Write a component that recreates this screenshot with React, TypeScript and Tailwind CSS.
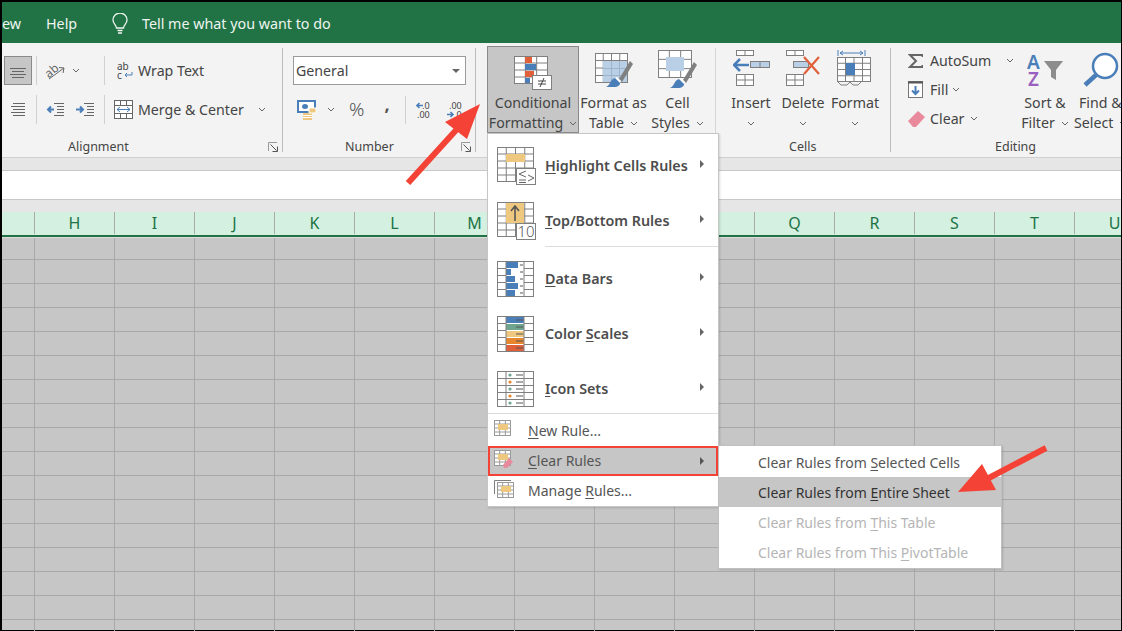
import type { ReactNode } from 'react'

// N, O and P sit behind the open menu
const COLS = ['', 'H', 'I', 'J', 'K', 'L', 'M', '', '', '', 'Q', 'R', 'S', 'T', 'U']
const ROWS = Array.from({ length: 17 }, (_, i) => i)

const GRAY = '#7f7f7f'
const BLUE = '#4a7eb8'
const ORANGE = '#e0603a'
const TAN = '#eec87e'

function Chevron({ className = '' }: { className?: string }) {
  return (
    <svg width="8" height="5" viewBox="0 0 8 5" className={`shrink-0 ${className}`}>
      <path d="M1 1l3 3 3-3" fill="none" stroke="#666" strokeWidth="1" />
    </svg>
  )
}

function Launcher() {
  return (
    <svg width="10" height="10" viewBox="0 0 10 10" className="shrink-0">
      <path d="M.5 9V.5H9" fill="none" stroke="#999" />
      <path d="M2.5 2.5l6 6M9.5 4.5v5h-5" fill="none" stroke="#555" />
    </svg>
  )
}

// table outline with evenly spaced lines, used by most of the ribbon and menu icons
function Grid({ x, y, w, h, cols, rows, stroke = GRAY, children }: { x: number; y: number; w: number; h: number; cols: number; rows: number; stroke?: string; children?: ReactNode }) {
  const vs = Array.from({ length: cols - 1 }, (_, i) => x + ((i + 1) * w) / cols)
  const hs = Array.from({ length: rows - 1 }, (_, i) => y + ((i + 1) * h) / rows)
  return (
    <>
      <rect x={x} y={y} width={w} height={h} fill="#fff" />
      <g stroke={stroke} strokeWidth="1" fill="none">
        {vs.map((v) => <path key={v} d={`M${v} ${y}V${y + h}`} />)}
        {hs.map((v) => <path key={v} d={`M${x} ${v}H${x + w}`} />)}
      </g>
      {children}
      <rect x={x + 0.5} y={y + 0.5} width={w - 1} height={h - 1} fill="none" stroke={stroke} />
    </>
  )
}

function AlignLines({ x = 0, w = 14 }: { x?: number; w?: number }) {
  return <path d={`M${x + 2} 1.5H${x + w}M${x} 4.5H${x + w}M${x + 2} 7.5H${x + w}M${x} 10.5H${x + w}M${x + 2} 13.5H${x + w}`} stroke="#666" fill="none" />
}

function CondIcon() {
  return (
    <svg width="38" height="34" viewBox="0 0 38 34">
      <Grid x={0} y={0} w={34} h={28} cols={3} rows={4}>
        <rect x="11" y="1" width="7" height="6" fill={ORANGE} />
        <rect x="11" y="8" width="11" height="6" fill={BLUE} />
        <rect x="11" y="15" width="9" height="6" fill={ORANGE} />
        <rect x="11" y="22" width="5" height="6" fill={BLUE} />
      </Grid>
      <rect x="18.5" y="19.5" width="19" height="14" fill="#fff" stroke={GRAY} />
      <path d="M24 25h8M24 28h8M30 22l-4 9" stroke="#444" fill="none" />
    </svg>
  )
}

function Brush({ x, y }: { x: number; y: number }) {
  return (
    <g transform={`translate(${x} ${y})`}>
      <path d="M14 14L25 -4l3 3-11 18z" fill="#808080" />
      <path d="M0 22c5 0 5-8 10-9 3 0 6 3 5 6-1 2-3 3-5 3z" fill={BLUE} />
      <path d="M10 13l2-1 4 4-1 2z" fill="#fff" />
    </g>
  )
}

function TableIcon() {
  return (
    <svg width="38" height="36" viewBox="0 0 38 36">
      <Grid x={0} y={0} w={33} h={30} cols={4} rows={4}>
        <rect x="8" y="8" width="25" height="22" fill="#b9cfe5" />
        <path d="M16.500 8v22M24.500 8v22M8 15.500h25M8 22.500h25" stroke="#9fb4c9" />
      </Grid>
      <Brush x={10} y={12} />
    </svg>
  )
}

function StylesIcon() {
  return (
    <svg width="39" height="38" viewBox="0 0 39 38">
      <Grid x={0} y={0} w={34} h={28} cols={3} rows={3}>
        <rect x="8" y="7" width="18" height="14" fill="#b9cfe5" />
      </Grid>
      <Brush x={11} y={16} />
    </svg>
  )
}

function InsertIcon() {
  return (
    <svg width="37" height="37" viewBox="0 0 37 37">
      <Grid x={3} y={0} w={18} h={6} cols={2} rows={1} />
      <rect x="17.5" y="11.5" width="19" height="6" fill="#b9cfe5" stroke={GRAY} />
      <path d="M27 12v6" stroke={GRAY} />
      <path d="M1 15h15M7 9l-6 6 6 6" fill="none" stroke={BLUE} strokeWidth="2.5" />
      <Grid x={3} y={24} w={18} h={12} cols={2} rows={2} />
    </svg>
  )
}

function DeleteIcon() {
  return (
    <svg width="36" height="37" viewBox="0 0 36 37">
      <Grid x={1} y={0} w={18} h={6} cols={2} rows={1} />
      <rect x="8.5" y="11.5" width="15" height="6" fill="#b9cfe5" stroke={GRAY} />
      <Grid x={1} y={24} w={18} h={12} cols={2} rows={2} />
      <path d="M19 7l15 17M34 7L19 24" stroke={ORANGE} strokeWidth="2.2" fill="none" />
    </svg>
  )
}

function FormatIcon() {
  return (
    <svg width="36" height="37" viewBox="0 0 36 37">
      <path d="M1 0v6M28 0v6M3 3h23M6 1L3 3l3 2M23 1l3 2-3 2" fill="none" stroke={BLUE} strokeWidth="1" />
      <Grid x={0} y={7} w={34} h={25} cols={4} rows={4}>
        <rect x="9" y="13" width="9" height="12" fill={BLUE} />
      </Grid>
      <path d="M1 32l3 3h6l3-3 3 3h5l3-3" fill="none" stroke={GRAY} />
    </svg>
  )
}

function SortIcon() {
  return (
    <svg width="38" height="36" viewBox="0 0 38 36">
      <text x="1" y="17" fontSize="19" fontWeight="600" fill={BLUE}>A</text>
      <text x="2" y="34" fontSize="19" fontWeight="600" fill="#9a5fc0">Z</text>
      <path d="M18 9h19l-7 9v10l-5-3v-7z" fill="#8c8c8c" />
    </svg>
  )
}

function FindIcon() {
  return (
    <svg width="38" height="35" viewBox="0 0 38 35">
      <circle cx="23" cy="14" r="12" fill="#fff" stroke={BLUE} strokeWidth="2.5" />
      <path d="M14 23L3 33" stroke={BLUE} strokeWidth="4.5" />
    </svg>
  )
}

// -- menu icons

function HighlightMenuIcon() {
  return (
    <svg width="40" height="38" viewBox="0 0 40 38">
      <Grid x={0} y={0} w={37} h={35} cols={4} rows={5}>
        <rect x="9" y="7" width="19" height="8" fill={TAN} />
      </Grid>
      <rect x="19.5" y="21.5" width="19" height="16" fill="#fff" stroke={GRAY} />
      <path d="M29 24l-7 3 7 3M31 28l6 3-6 3M22 33h7M22 35.5h7" fill="none" stroke="#666" />
    </svg>
  )
}

function TopMenuIcon() {
  return (
    <svg width="40" height="38" viewBox="0 0 40 38">
      <Grid x={0} y={0} w={37} h={35} cols={4} rows={5}>
        <rect x="9" y="1" width="18" height="20" fill={TAN} />
      </Grid>
      <path d="M18 19V4M14 9l4-5 4 5" fill="none" stroke="#555" strokeWidth="1.6" />
      <rect x="19.5" y="21.5" width="19" height="16" fill="#fff" stroke={GRAY} />
      <text x="29" y="35" textAnchor="middle" fontSize="15" fontWeight="300" fill="#555">10</text>
    </svg>
  )
}

function BarsMenuIcon({ variant }: { variant: 'data' | 'color' | 'icons' }) {
  const dataW = [12, 5, 9, 12, 9]
  const colors = [BLUE, '#6fa58e', TAN, '#e8862d', ORANGE]
  const dots = ['#6fa58e', '#e8862d', '#6fa58e', '#e8862d', '#6fa58e']
  return (
    <svg width="37" height="36" viewBox="0 0 37 36">
      <rect width="37" height="36" fill="#fff" />
      {[0, 1, 2, 3, 4].map((i) => (
        <g key={i}>
          {variant === 'data' && <rect x="9" y={i * 7 + 1} width={dataW[i]} height="6" fill={BLUE} />}
          {variant === 'color' && <rect x="9" y={i * 7 + 1} width="18" height="6" fill={colors[i]} />}
          {variant === 'icons' && <circle cx="13" cy={i * 7 + 4} r="1.6" fill={dots[i]} />}
          <path d={`M${variant === 'data' ? 23 : 19} ${i * 7 + 4}h${variant === 'data' ? 3 : 7}`} stroke="#555" />
        </g>
      ))}
      <g stroke={GRAY} fill="none">
        <rect x=".5" y=".5" width="36" height="35" />
        <path d="M9 0v36M27 0v36M0 7.500h9M0 14.500h9M0 21.500h9M0 28.500h9M27 7.500h10M27 14.500h10M27 21.500h10M27 28.500h10" />
        {variant === 'icons' && <path d="M9 7.500h18M9 14.500h18M9 21.500h18M9 28.500h18" />}
      </g>
    </svg>
  )
}

function SmallRuleIcon({ kind }: { kind: 'new' | 'clear' | 'manage' }) {
  return (
    <svg width="22" height="21" viewBox="0 0 22 21">
      {kind === 'manage' && <path d="M.5 14V.5H17" fill="none" stroke={GRAY} />}
      <g transform={kind === 'manage' ? 'translate(3 2)' : 'translate(0 0)'}>
        <Grid x={0} y={0} w={17} h={16} cols={3} rows={4} stroke="#9a9a9a">
          <rect x="4" y="4" width="10" height="6" fill={TAN} />
        </Grid>
      </g>
      {kind === 'clear' && <path d="M9 15l6-7 4 4-6 6h-3z" fill="#e88a9c" />}
    </svg>
  )
}

function BigMenuItem({ icon, children }: { icon: ReactNode; children: ReactNode }) {
  return (
    <div className="flex h-[55px] items-center pl-[9px] pr-[14px]">
      <span className="flex w-[48px] shrink-0">{icon}</span>
      <span className="mt-px text-[14.3px] font-semibold text-[#4d4d4d]">{children}</span>
      <span className="ml-auto -mt-1 h-0 w-0 border-y-[4px] border-l-[4px] border-y-transparent border-l-[#666]" />
    </div>
  )
}

function SmallMenuItem({ icon, children, active }: { icon: ReactNode; children: ReactNode; active?: boolean }) {
  return (
    <div className={`flex h-[30px] items-center pl-[6px] pr-[14px] text-[14px] text-[#555] ${active ? 'border-2 border-[#f44336] bg-[#c6c6c6] !pl-[4px] !pr-[12px] text-[#444]' : ''}`}>
      <span className="flex w-[34px] shrink-0 -translate-y-[1px]">{icon}</span>
      <span className="-mt-[2px]">{children}</span>
      {active && <span className="ml-auto h-0 w-0 border-y-[4px] border-l-[4px] border-y-transparent border-l-[#555]" />}
    </div>
  )
}

function BigButton({ width, icon, iconH = 'items-end', lines, caret, active, className = '' }: { width: number; icon: ReactNode; iconH?: string; lines: string[]; caret?: boolean; active?: boolean; className?: string }) {
  return (
    <div
      style={{ width }}
      className={`flex h-[87px] shrink-0 flex-col items-center text-[14.2px] leading-[20px] text-[#444] ${active ? 'border border-[#8a8a8a] bg-[#c6c6c6]' : ''} ${className}`}
    >
      <div className={`flex shrink-0 justify-center ${active ? 'h-[46px]' : 'h-[47px]'} ${iconH}`}>{icon}</div>
      <div className="whitespace-nowrap">{lines[0]}</div>
      <div className="flex h-[20px] items-center gap-[6px] whitespace-nowrap">
        {lines[1]}
        {caret && <Chevron />}
      </div>
    </div>
  )
}

function GroupLabel({ children, launcher }: { children: ReactNode; launcher?: boolean }) {
  return (
    <div className="-mb-[2px] mt-auto flex h-[14px] items-center pr-[4px] text-[12.5px] leading-none">
      {children}
      {launcher && <span className="ml-auto"><Launcher /></span>}
    </div>
  )
}

function Arrow({ className, viewBox, shaft, head }: { className: string; viewBox: string; shaft: string; head: string }) {
  return (
    <svg className={`absolute ${className}`} viewBox={viewBox}>
      <path d={shaft} stroke="#f44336" strokeWidth="6" fill="none" />
      <polygon points={head} fill="#f44336" />
    </svg>
  )
}

export default function App() {
  return (
    <div className="relative h-[631px] w-[1122px] overflow-hidden bg-black pb-px pl-[2px] pr-px pt-[2px] font-['Noto_Sans','Open_Sans',sans-serif]">
      <div className="flex h-full flex-col bg-[#c6c6c6]">

        {/* Title bar */}
        <div className="flex h-[41px] shrink-0 items-center bg-[#217346] pt-[3px] text-[14.3px] text-[#eef5f0]">
          <span className="w-[44px] overflow-hidden whitespace-nowrap">ew</span>
          <span className="w-[65px]">Help</span>
          <svg width="18" height="22" viewBox="0 0 18 22" className="shrink-0" fill="none" stroke="#eef5f0" strokeWidth="1.3">
            <path d="M5.500 15c0-3-3.500-4-3.500-8a7 7 0 0 1 14 0c0 4-3.500 5-3.500 8z" />
            <path d="M6.500 17.500h5M7 20h4" />
          </svg>
          <span className="ml-[13px] whitespace-nowrap">Tell me what you want to do</span>
        </div>

        {/* Ribbon */}
        <div className="flex h-[114px] shrink-0 overflow-hidden bg-[#f3f3f3] text-[14.2px] text-[#444]">

          {/* Alignment */}
          <div className="my-[5px] flex w-[281px] shrink-0 flex-col border-r border-[#bdbdbd] pt-[8px]">
            <div className="grid h-[29px] grid-cols-[34px_68px_178px]">
              <div className="flex items-center pl-[2px]">
                <div className="flex h-[29px] w-[28px] items-center justify-center border border-[#8a8a8a] bg-[#c6c6c6]">
                  <svg width="16" height="15" viewBox="0 0 16 15"><path d="M0 5.500h16M2 8.500h12M0 11.500h16M2 14.500h12" stroke="#666" fill="none" /></svg>
                </div>
              </div>
              <div className="flex items-center gap-[6px] border-l border-[#d0d0d0] pl-[8px]">
                <svg width="21" height="20" viewBox="0 0 21 20">
                  <text x="0" y="13" fontSize="12" fill="#666" transform="rotate(-40 8 10)">ab</text>
                  <path d="M4 18L19 7M14 6.500l5 .5-1 5" fill="none" stroke="#666" />
                </svg>
                <Chevron />
              </div>
              <div className="flex items-center border-l border-[#d0d0d0] pl-[12px]">
                <svg width="17" height="20" viewBox="0 0 17 20">
                  <text x="0" y="9" fontSize="10" fill="#444">ab</text>
                  <text x="0" y="18" fontSize="10" fill="#444">c</text>
                  <path d="M15 11v3H8M10 12l-2 2 2 2" fill="none" stroke={BLUE} />
                </svg>
                <span className="ml-[4px]">Wrap Text</span>
              </div>
            </div>
            <div className="mt-[10px] grid h-[29px] grid-cols-[34px_68px_178px]">
              <div className="flex items-center pl-[9px]">
                <svg width="15" height="15" viewBox="0 0 15 15"><AlignLines /></svg>
              </div>
              <div className="flex items-center gap-[12px] border-l border-[#d0d0d0] pl-[9px]">
                <svg width="18" height="15" viewBox="0 0 18 15">
                  <path d="M8 1.500h10M11 4.500h7M11 7.500h7M11 10.500h7M8 13.500h10" stroke="#666" />
                  <path d="M8 7.500H2M5 4.500l-3 3 3 3" fill="none" stroke={BLUE} strokeWidth="2" />
                </svg>
                <svg width="18" height="15" viewBox="0 0 18 15">
                  <path d="M8 1.500h10M11 4.500h7M11 7.500h7M11 10.500h7M8 13.500h10" stroke="#666" />
                  <path d="M0 7.500h7M4 4.500l3 3-3 3" fill="none" stroke={BLUE} strokeWidth="2" />
                </svg>
              </div>
              <div className="flex items-center border-l border-[#d0d0d0] pl-[9px]">
                <svg width="19" height="19" viewBox="0 0 19 19">
                  <rect x=".5" y=".5" width="18" height="18" fill="#fff" stroke="#666" />
                  <path d="M0 5.500h19M0 13.500h19M6.500 0v5M12.500 0v5M6.500 14v5M12.500 14v5" stroke="#666" />
                  <path d="M3 9.500h13M6 7l-3 2.500L6 12M13 7l3 2.500-3 2.500" fill="none" stroke={BLUE} />
                </svg>
                <span className="ml-[5px]">Merge &amp; Center</span>
                <Chevron className="ml-[14px]" />
              </div>
            </div>
            <GroupLabel launcher><span className="ml-[66px]">Alignment</span></GroupLabel>
          </div>

          {/* Number */}
          <div className="my-[5px] flex w-[193px] shrink-0 flex-col border-r border-[#bdbdbd] pt-[8px]">
            <div className="ml-[10px] flex h-[29px] w-[173px] items-center border border-[#9a9a9a] bg-white pl-[2px] pr-[5px]">
              <span>General</span>
              <span className="ml-auto h-0 w-0 border-x-[4px] border-t-[4px] border-x-transparent border-t-[#666]" />
            </div>
            <div className="mt-[10px] flex h-[29px] items-center">
              <svg width="20" height="20" viewBox="0 0 20 20" className="ml-[14px]">
                <rect x="1" y="1" width="17" height="11" fill="#fff" stroke={BLUE} strokeWidth="2" />
                <ellipse cx="8" cy="6.500" rx="3" ry="2.500" fill={BLUE} />
                <path d="M6 13h9v7H6z" fill={TAN} />
                <path d="M6 15.500h9M6 17.500h9M12 8h7v5h-7z" stroke="#fff" fill={TAN} />
              </svg>
              <Chevron className="ml-[10px]" />
              <span className="ml-[14px] text-[19px] font-light leading-none text-[#555]">%</span>
              <span className="-mt-3 ml-[20px] text-[18px] font-bold leading-none text-[#555]">,</span>
              <span className="ml-[15px] h-[28px] w-px bg-[#d0d0d0]" />
              <svg width="17" height="18" viewBox="0 0 17 18" className="ml-[10px]">
                <text x="6" y="8" fontSize="9" fill="#444">.0</text>
                <text x="1" y="17" fontSize="9" fill="#444">.00</text>
                <path d="M7 4.500H1M3.500 2l-2.500 2.500L3.500 7" fill="none" stroke={BLUE} strokeWidth="1.600" />
              </svg>
              <svg width="17" height="18" viewBox="0 0 17 18" className="ml-[13px]">
                <text x="3" y="8" fontSize="9" fill="#444">.00</text>
                <text x="8" y="17" fontSize="9" fill="#444">.0</text>
                <path d="M1 13.500h6M4.500 11l2.500 2.500L4.500 16" fill="none" stroke={BLUE} strokeWidth="1.600" />
              </svg>
            </div>
            <GroupLabel launcher><span className="ml-[62px]">Number</span></GroupLabel>
          </div>

          {/* Styles, its label sits behind the open menu */}
          <div className="my-[5px] flex w-[240px] shrink-0 items-start border-r border-[#d6d6d6]">
            <BigButton width={92} icon={<CondIcon />} iconH="items-start pt-[9px]" lines={['Conditional', 'Formatting']} caret active className="-mt-[2px] ml-[11px]" />
            <BigButton width={63} icon={<TableIcon />} iconH="items-start pt-[7px]" lines={['Format as', 'Table']} caret className="-mt-[2px] ml-[3px]" />
            <BigButton width={63} icon={<StylesIcon />} iconH="items-start pt-[4px]" lines={['Cell', 'Styles']} caret className="-mt-[2px] ml-px" />
          </div>

          {/* Cells */}
          <div className="my-[5px] flex w-[175px] shrink-0 flex-col border-r border-[#bdbdbd]">
            <div className="-mt-[2px] flex pl-[9px]">
              {[['Insert', <InsertIcon key="i" />], ['Delete', <DeleteIcon key="d" />], ['Format', <FormatIcon key="f" />]].map(([label, icon]) => (
                <div key={label as string} className="flex h-[87px] w-[52px] flex-col items-center text-[14.2px] leading-[20px]">
                  <div className="flex h-[47px] shrink-0 items-start pt-[4px]">{icon}</div>
                  <div>{label}</div>
                  <div className="flex h-[20px] items-center"><Chevron /></div>
                </div>
              ))}
            </div>
            <GroupLabel><span className="ml-[73px]">Cells</span></GroupLabel>
          </div>

          {/* Editing */}
          <div className="my-[5px] flex min-w-0 flex-1 flex-col">
            <div className="-mt-[2px] flex">
              <div className="ml-[17px] flex w-[107px] shrink-0 flex-col">
                <div className="flex h-[29px] items-center">
                  <svg width="15" height="14" viewBox="0 0 15 14"><path d="M14.500 3V1H2l6 6-6 6h12.500v-2" fill="none" stroke="#666" strokeWidth="2" /></svg>
                  <span className="ml-[7px]">AutoSum</span>
                  <Chevron className="ml-[15px]" />
                </div>
                <div className="flex h-[29px] items-center">
                  <svg width="15" height="17" viewBox="0 0 15 17">
                    <rect x=".5" y=".5" width="14" height="16" fill="#fff" stroke="#777" />
                    <path d="M0 1.500h15" stroke="#555" strokeWidth="2" />
                    <path d="M7.500 5v8M4 9.500l3.500 3.500L11 9.500" fill="none" stroke={BLUE} strokeWidth="2" />
                  </svg>
                  <span className="ml-[7px]">Fill</span>
                  <Chevron className="ml-[4px]" />
                </div>
                <div className="flex h-[29px] items-center">
                  <svg width="17" height="16" viewBox="0 0 17 16"><path d="M0 10L10 0l7 6-9 10H5z" fill="#e88a9c" /></svg>
                  <span className="ml-[5px]">Clear</span>
                  <Chevron className="ml-[6px]" />
                </div>
              </div>
              <div className="flex">
                <BigButton width={60} icon={<SortIcon />} iconH="items-start pt-[6px]" lines={['Sort &', 'Filter']} caret />
                <div className="-ml-px flex h-[87px] w-[60px] shrink-0 flex-col text-[14.2px] leading-[20px]">
                  <div className="flex h-[47px] shrink-0 items-start pl-[8px] pt-[6px]"><FindIcon /></div>
                  <div className="whitespace-nowrap pl-[5px]">Find &amp;</div>
                  <div className="flex h-[20px] items-center gap-[6px] whitespace-nowrap">Select <Chevron /></div>
                </div>
              </div>
            </div>
            <GroupLabel><span className="ml-[104px]">Editing</span></GroupLabel>
          </div>
        </div>

        {/* Formula bar */}
        <div className="h-[13px] shrink-0 border-t border-[#cfcfcf] bg-[#e6e6e6]" />
        <div className="h-[30px] shrink-0 border-y border-[#c8c8c8] bg-white" />
        <div className="h-[12px] shrink-0 bg-[#e6e6e6]" />

        {/* Column headers */}
        <div className="flex h-[25px] shrink-0 border-b-2 border-[#217346] bg-[#d3f0e0]">
          {COLS.map((c, i) => (
            <div
              key={i}
              className={`flex h-[22px] shrink-0 items-center justify-center border-r border-[#ababab] text-[16px] text-[#217346] ${i === 0 ? 'w-[33px]' : 'w-[80px]'}`}
            >
              {c}
            </div>
          ))}
        </div>

        {/* Sheet */}
        <div className="border-t border-[#dcdcdc]">
          {ROWS.map((r) => (
            <div key={r} className={`flex border-b border-[#a9a9a9] ${r === 0 ? 'h-[22px]' : 'h-[24px]'}`}>
              {COLS.map((_, i) => (
                <div key={i} className={`h-full shrink-0 border-r border-[#a9a9a9] ${i === 0 ? 'w-[33px]' : 'w-[80px]'}`} />
              ))}
            </div>
          ))}
        </div>
      </div>

      {/* Conditional formatting menu */}
      <div className="absolute left-[487px] top-[133px] flex h-[374px] w-[232px] flex-col border border-[#c6c6c6] bg-white pt-[4px] shadow-[1px_1px_2px_rgba(0,0,0,0.15)]">
        <BigMenuItem icon={<HighlightMenuIcon />}><u className="underline-offset-2">H</u>ighlight Cells Rules</BigMenuItem>
        <BigMenuItem icon={<TopMenuIcon />}><u className="underline-offset-2">T</u>op/Bottom Rules</BigMenuItem>
        <div className="flex h-[3px] justify-end"><span className="mt-[-2px] h-px w-[173px] bg-[#dcdcdc]" /></div>
        <BigMenuItem icon={<BarsMenuIcon variant="data" />}><u className="underline-offset-2">D</u>ata Bars</BigMenuItem>
        <BigMenuItem icon={<BarsMenuIcon variant="color" />}>Color <u className="underline-offset-2">S</u>cales</BigMenuItem>
        <BigMenuItem icon={<BarsMenuIcon variant="icons" />}><u className="underline-offset-2">I</u>con Sets</BigMenuItem>
        <div className="mt-[-3px] h-px bg-[#dcdcdc]" />
        <div className="h-[2px]" />
        <SmallMenuItem icon={<SmallRuleIcon kind="new" />}><u className="underline-offset-2">N</u>ew Rule...</SmallMenuItem>
        <SmallMenuItem active icon={<SmallRuleIcon kind="clear" />}><u className="underline-offset-2">C</u>lear Rules</SmallMenuItem>
        <SmallMenuItem icon={<SmallRuleIcon kind="manage" />}>Manage <u className="underline-offset-2">R</u>ules...</SmallMenuItem>
      </div>

      {/* Clear rules submenu */}
      <div className="absolute left-[718px] top-[445px] flex h-[124px] w-[284px] flex-col border border-[#c0c0c0] bg-white py-px text-[14px] shadow-[1px_1px_2px_rgba(0,0,0,0.15)]">
        <div className="flex h-[30px] items-center pl-[39px] text-[#555]">Clear Rules from&nbsp;<u className="underline-offset-2">S</u>elected Cells</div>
        <div className="flex h-[30px] items-center bg-[#c6c6c6] pl-[39px] text-[#333]">Clear Rules from&nbsp;<u className="underline-offset-2">E</u>ntire Sheet</div>
        <div className="flex h-[30px] items-center pl-[39px] text-[#b5b5b5]">Clear Rules from&nbsp;<u className="underline-offset-2">T</u>his Table</div>
        <div className="flex h-[30px] items-center pl-[39px] text-[#b5b5b5]">Clear Rules from This&nbsp;<u className="underline-offset-2">P</u>ivotTable</div>
      </div>

      {/* Annotation arrows */}
      <Arrow className="left-[400px] top-[100px] h-[90px] w-[84px]" viewBox="400 100 84 90" shaft="M408 183L458 128" head="480,104 445,122 467,139" />
      <Arrow className="left-[950px] top-[440px] h-[60px] w-[100px]" viewBox="950 440 100 60" shaft="M1046 448L985 480" head="958,492 982,464 996,490" />
    </div>
  )
}
